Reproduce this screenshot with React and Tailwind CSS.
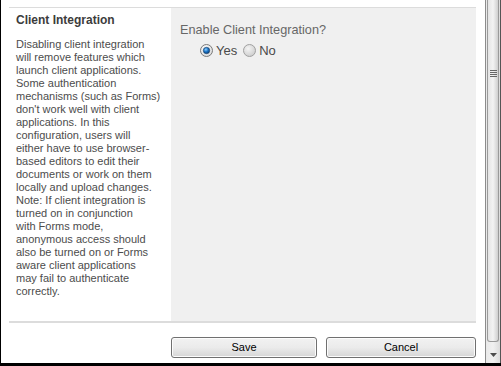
import React from 'react';

const font = { fontFamily: '"Liberation Sans", Tahoma, Arial, sans-serif' };

const lines = [
  'Disabling client integration',
  'will remove features which',
  'launch client applications.',
  'Some authentication',
  'mechanisms (such as Forms)',
  "don't work well with client",
  'applications. In this',
  'configuration, users will',
  'either have to use browser-',
  'based editors to edit their',
  'documents or work on them',
  'locally and upload changes.',
  'Note: If client integration is',
  'turned on in conjunction',
  'with Forms mode,',
  'anonymous access should',
  'also be turned on or Forms',
  'aware client applications',
  'may fail to authenticate',
  'correctly.',
];

function Radio({ checked }) {
  return (
    <svg width="13" height="13" viewBox="0 0 13 13" className="shrink-0">
      <defs>
        <radialGradient id="rg-on" cx="0.4" cy="0.35" r="0.7">
          <stop offset="0" stopColor="#ffffff" />
          <stop offset="1" stopColor="#d8d8d8" />
        </radialGradient>
        <radialGradient id="rg-off" cx="0.4" cy="0.35" r="0.75">
          <stop offset="0" stopColor="#f4f4f4" />
          <stop offset="1" stopColor="#c9c9c9" />
        </radialGradient>
        <radialGradient id="dot" cx="0.4" cy="0.35" r="0.7">
          <stop offset="0" stopColor="#8fd0ff" />
          <stop offset="0.5" stopColor="#1a74c7" />
          <stop offset="1" stopColor="#0b3d73" />
        </radialGradient>
      </defs>
      <circle cx="6.5" cy="6.5" r="6" fill={checked ? 'url(#rg-on)' : 'url(#rg-off)'} stroke={checked ? '#7a7a7a' : '#a0a0a0'} />
      {checked && <circle cx="6.5" cy="6.5" r="3.2" fill="url(#dot)" stroke="#1d3f66" strokeWidth="0.6" />}
    </svg>
  );
}

function Button({ children }) {
  return (
    <button className="h-[21px] rounded-[3px] border border-[#707070] bg-gradient-to-b from-[#f2f2f2] via-[#ebebeb] to-[#d6d6d6] text-[11px] text-black shadow-[inset_0_0_0_1px_#fcfcfc]">
      {children}
    </button>
  );
}

function Scrollbar() {
  return (
    <div className="w-[16px] h-full border-l border-r border-[#8c8c8c] border-r-[#555] bg-gradient-to-r from-[#e9e9e9] via-[#f1f1f1] to-[#dcdcdc] flex flex-col">
      <div className="h-[342px] mx-[1px] rounded-b-[3px] border border-t-0 border-[#9a9a9a] bg-gradient-to-r from-[#e4e4e4] via-[#f3f3f3] to-[#cfcfcf] flex flex-col items-center">
        <div className="mt-[70px] flex flex-col gap-[1px]">
          <div className="w-[7px] h-[1px] bg-[#666]" />
          <div className="w-[7px] h-[1px] bg-[#666]" />
          <div className="w-[7px] h-[1px] bg-[#666]" />
          <div className="w-[7px] h-[1px] bg-[#666]" />
        </div>
      </div>
      <div className="flex-1 flex items-center justify-center pt-[4px]">
        <svg width="7" height="4" viewBox="0 0 7 4">
          <path d="M0 0 L7 0 L3.5 4 Z" fill="#4d4d4d" />
        </svg>
      </div>
    </div>
  );
}

export default function App() {
  return (
    <div className="w-[501px] h-[366px] bg-white flex overflow-hidden border-b-[3px] border-black" style={font}>
      <div className="flex-1 h-full border-l border-black flex flex-col">
        <div className="ml-[8px] mr-[9px] mt-[7px] h-[316px] border-t border-[#dcdcdc] border-b-2 flex">
          <div className="w-[162px] pl-[7px] pt-[5px]">
            <h2 className="text-[12px] font-bold text-[#3c3c3c] leading-[14px]">Client Integration</h2>
            <p className="mt-[11px] text-[11px] leading-[13px] text-[#4c4c4c] whitespace-nowrap">
              {lines.map((l) => (
                <span key={l} className="block">{l}</span>
              ))}
            </p>
          </div>
          <div className="flex-1 bg-[#f0f0f0] pl-[9px] pt-[14px]">
            <div className="text-[12.7px] leading-[16px] text-[#676767]">Enable Client Integration?</div>
            <div className="mt-[3px] ml-[20px] flex items-center text-[13px] text-[#4a4a4a]">
              <label className="flex items-center gap-[3px]">
                <Radio checked />
                <span>Yes</span>
              </label>
              <label className="flex items-center gap-[3px] ml-[6px]">
                <Radio />
                <span>No</span>
              </label>
            </div>
          </div>
        </div>
        <div className="mt-[14px] mr-[9px] flex justify-end gap-[9px]">
          <div className="w-[146px] flex flex-col"><Button>Save</Button></div>
          <div className="w-[150px] flex flex-col"><Button>Cancel</Button></div>
        </div>
      </div>
      <Scrollbar />
    </div>
  );
}
